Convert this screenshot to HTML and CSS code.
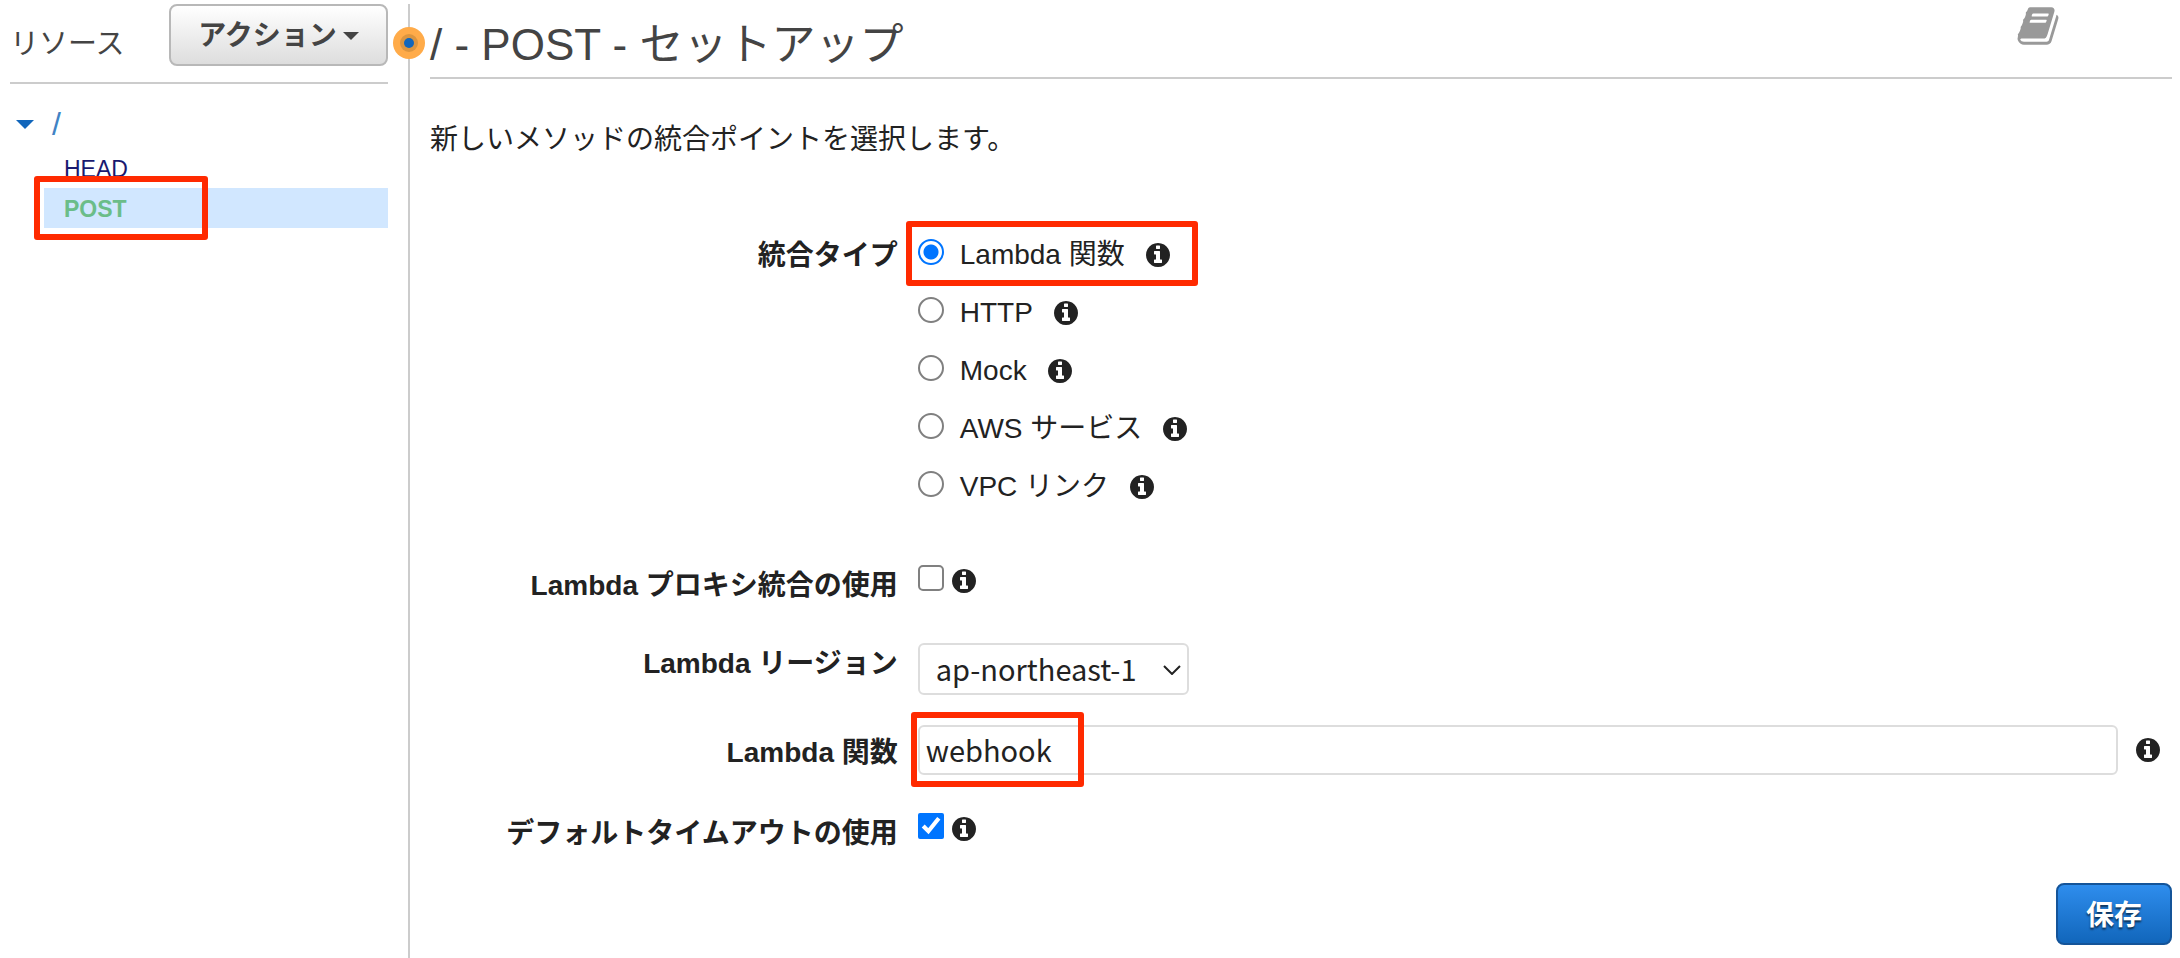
FILE: index.html
```html
<!DOCTYPE html>
<html lang="ja">
<head>
    <meta charset="UTF-8">
    <meta name="viewport" content="width=device-width, initial-scale=1.0">
    <title>API Gateway</title>
    <link rel="stylesheet" href="styles.css">
</head>
<body>
    <svg class="sprite" aria-hidden="true">
        <symbol id="info" viewBox="128 128 1536 1536">
            <path d="M1152 1376v-160q0-14-9-23t-23-9h-96v-512q0-14-9-23t-23-9h-320q-14 0-23 9t-9 23v160q0 14 9 23t23 9h96v320h-96q-14 0-23 9t-9 23v160q0 14 9 23t23 9h448q14 0 23-9t9-23zm-128-896v-160q0-14-9-23t-23-9h-192q-14 0-23 9t-9 23v160q0 14 9 23t23 9h192q14 0 23-9t9-23zm640 416q0 209-103 385.500t-279.500 279.500-385.500 103-385.500-103-279.500-279.500-103-385.500 103-385.500 279.500-279.500 385.500-103 385.500 103 279.500 279.500 103 385.500z"/>
        </symbol>
    </svg>
    <div class="layout">
        <aside class="sidebar">
            <div class="sidebar-header">
                <span class="sidebar-title">リソース</span>
                <button type="button" class="btn-action">アクション<span class="caret"></span></button>
            </div>
            <div class="tree-root">
                <span class="tree-caret"></span>
                <a href="#">/</a>
            </div>
            <ul class="methods">
                <li><a href="#" class="head">HEAD</a></li>
                <li class="selected"><a href="#" class="post">POST</a><span class="mark mark-post"></span></li>
            </ul>
        </aside>
        <div class="splitter">
            <svg class="handle" viewBox="0 0 32 32">
                <circle cx="16" cy="16" r="16" fill="#ffab49"/>
                <circle cx="16" cy="16" r="9" fill="#dc953f"/>
                <circle cx="16" cy="16" r="5" fill="#1166bb"/>
            </svg>
        </div>
        <main class="main">
            <header class="page-header">
                <h1>/ - POST - セットアップ</h1>
                <a href="#" class="docs" aria-label="Docs">
                    <svg viewBox="0 0 1792 1792">
                        <path d="M1703 478q40 57 18 129l-275 906q-19 64-76.500 107.500t-122.500 43.500h-923q-77 0-148.500-53.500t-99.500-131.500q-24-67-2-127 0-4 3-27t4-37q1-8-3-21.500t-3-19.500q2-11 8-21t16.500-23.500 16.500-23.500q23-38 45-91.500t30-91.500q3-10 .5-30t-.5-28q3-11 17-28t17-23q21-36 42-92t25-90q1-9-2.500-32t.5-28q4-13 22-30.500t22-22.500q19-26 42.500-84.500t27.500-96.500q1-8-3-25.500t-2-26.500q2-8 9-18t18-23 17-21q8-12 16.500-30.500t15-35 16-36 19.500-32 26.500-23.500 36-11.500 47.500 5.500l-1 3q38-9 51-9h761q74 0 114 56t18 130l-274 906q-36 119-71.500 153.500t-128.500 34.500h-869q-27 0-38 15-11 16-1 43 24 70 144 70h923q29 0 56-15.500t35-41.500l300-987q7-22 5-57 38 15 59 43zm-1064 2q-4 13 2 22.500t20 9.500h608q13 0 25.500-9.500t16.500-22.500l21-64q4-13-2-22.500t-20-9.500h-608q-13 0-25.500 9.500t-16.500 22.500zm-83 256q-4 13 2 22.500t20 9.500h608q13 0 25.500-9.500t16.500-22.500l21-64q4-13-2-22.500t-20-9.500h-608q-13 0-25.500 9.500t-16.500 22.500z"/>
                    </svg>
                </a>
            </header>
            <p class="lead">新しいメソッドの統合ポイントを選択します。</p>
            <form>
                <div class="row types" role="radiogroup" aria-labelledby="typeLabel">
                    <span class="row-label" id="typeLabel">統合タイプ</span>
                    <div class="options">
                        <div class="option">
                            <input type="radio" id="typeLambda" name="type" checked>
                            <label for="typeLambda">Lambda 関数</label>
                            <svg class="info"><use href="#info"/></svg>
                            <span class="mark mark-type"></span>
                        </div>
                        <div class="option">
                            <input type="radio" id="typeHttp" name="type">
                            <label for="typeHttp">HTTP</label>
                            <svg class="info"><use href="#info"/></svg>
                        </div>
                        <div class="option">
                            <input type="radio" id="typeMock" name="type">
                            <label for="typeMock">Mock</label>
                            <svg class="info"><use href="#info"/></svg>
                        </div>
                        <div class="option">
                            <input type="radio" id="typeAws" name="type">
                            <label for="typeAws">AWS サービス</label>
                            <svg class="info"><use href="#info"/></svg>
                        </div>
                        <div class="option">
                            <input type="radio" id="typeVpc" name="type">
                            <label for="typeVpc">VPC リンク</label>
                            <svg class="info"><use href="#info"/></svg>
                        </div>
                    </div>
                </div>
                <div class="row">
                    <label class="row-label" for="proxy">Lambda プロキシ統合の使用</label>
                    <div class="check">
                        <input type="checkbox" id="proxy">
                        <svg class="info"><use href="#info"/></svg>
                    </div>
                </div>
                <div class="row row-select">
                    <label class="row-label" for="region">Lambda リージョン</label>
                    <div class="select">
                        <select id="region">
                            <option>ap-northeast-1</option>
                        </select>
                        <svg class="chevron" viewBox="0 0 18 10"><path d="M1 1l8 8 8-8"/></svg>
                    </div>
                </div>
                <div class="row row-text">
                    <label class="row-label" for="function">Lambda 関数</label>
                    <div class="text">
                        <input type="text" id="function" value="webhook">
                        <svg class="info"><use href="#info"/></svg>
                        <span class="mark mark-function"></span>
                    </div>
                </div>
                <div class="row">
                    <label class="row-label" for="timeout">デフォルトタイムアウトの使用</label>
                    <div class="check">
                        <input type="checkbox" id="timeout" checked>
                        <svg class="info"><use href="#info"/></svg>
                    </div>
                </div>
                <div class="actions">
                    <button type="submit" class="btn-save">保存</button>
                </div>
            </form>
        </main>
    </div>
</body>
</html>
```
FILE: styles.css
```css
* {
    box-sizing: border-box;
}
body {
    margin: 0;
    background-color: #fff;
    color: #222;
    font-family: "Liberation Sans", "Noto Sans CJK JP", sans-serif;
    font-size: 28px;
    line-height: 38px;
}
a {
    text-decoration: none;
}
.sprite {
    display: none;
}
.layout {
    display: flex;
    min-height: 100vh;
    padding: 4px 8px 0 10px;
}

/* sidebar */
.sidebar {
    flex: 0 0 378px;
}
.sidebar-header {
    display: flex;
    justify-content: space-between;
    align-items: flex-start;
    height: 80px;
    border-bottom: 2px solid #ccc;
}
.sidebar-title {
    padding-top: 21px;
    color: #444;
    font-size: 29px;
}
.btn-action {
    display: flex;
    justify-content: center;
    align-items: center;
    gap: 6px;
    width: 219px;
    height: 62px;
    padding: 0 0 4px;
    border: 2px solid #b8b8b8;
    border-radius: 8px;
    background: linear-gradient(#fff, #ddd);
    color: #444;
    font: bold 28px "Liberation Sans", "Noto Sans CJK JP", sans-serif;
}
.caret {
    margin-top: 6px;
    border-top: 8px solid #444;
    border-left: 8px solid transparent;
    border-right: 8px solid transparent;
}
.tree-root {
    display: flex;
    align-items: center;
    gap: 18px;
    height: 64px;
    padding: 16px 0 0 6px;
}
.tree-root a {
    color: #4183c4;
    font-size: 32px;
}
.tree-caret {
    border-top: 9px solid #1166bb;
    border-left: 9px solid transparent;
    border-right: 9px solid transparent;
}
.methods {
    margin: 0 0 0 34px;
    padding: 0;
    list-style: none;
    font-size: 23px;
    line-height: 38px;
}
.methods li {
    position: relative;
    padding: 2px 0 0 20px;
}
.methods .selected {
    background-color: #d1e7ff;
}
.head {
    color: #191970;
}
.post {
    color: #6bbd89;
    font-weight: bold;
}

/* splitter */
.splitter {
    position: relative;
    flex: 0 0 2px;
    margin: 0 20px;
    background-color: #ccc;
}
.handle {
    position: absolute;
    top: 23px;
    left: -15px;
    width: 32px;
    height: 32px;
}

/* content */
.main {
    flex: 1;
}
.page-header {
    display: flex;
    justify-content: space-between;
    height: 75px;
    padding-right: 112px;
    border-bottom: 2px solid #ccc;
}
h1 {
    margin: 0;
    padding-top: 13px;
    color: #444;
    font-size: 44px;
    font-weight: normal;
    line-height: 56px;
}
.docs svg {
    display: block;
    width: 44px;
    height: 44px;
    fill: #999;
}
.lead {
    margin: 42px 0 66px;
}
.row {
    display: flex;
    margin-bottom: 38px;
}
.row-label {
    flex: 0 0 28%;
    padding: 2px 20px 0 0;
    font-weight: bold;
    text-align: right;
}
.types {
    margin-bottom: 50px;
}
.types .row-label {
    padding-top: 12px;
}
.option {
    position: relative;
    display: flex;
    align-items: center;
    height: 58px;
}
.option label {
    margin: 0 21px 0 16px;
    padding-top: 2px;
}
input[type="radio"],
input[type="checkbox"] {
    flex: none;
    width: 26px;
    height: 26px;
    margin: 0;
}
input[type="radio"] {
    margin-bottom: 4px;
    border: 2px solid #808080;
    border-radius: 50%;
    background-color: #fff;
    appearance: none;
}
input[type="radio"]:checked {
    border-color: #0075ff;
    background: radial-gradient(circle, #0075ff 7px, #fff 8px);
}
input[type="checkbox"]:not(:checked) {
    border: 2px solid #808080;
    border-radius: 5px;
    background-color: #fff;
    appearance: none;
}
.info {
    flex: none;
    width: 24px;
    height: 24px;
    fill: #222;
}
.check {
    display: flex;
    gap: 8px;
}
.check .info,
.option .info {
    margin-top: 4px;
}
.option .info {
    margin-top: 2px;
}
.select {
    position: relative;
}
select,
input[type="text"] {
    display: block;
    border: 2px solid #ddd;
    border-radius: 6px;
    background-color: #fff;
    color: #222;
    font: 29px "Noto Sans CJK JP", sans-serif;
}
select {
    width: 271px;
    height: 52px;
    padding: 0 16px 3px;
    appearance: none;
}
.chevron {
    position: absolute;
    top: 22px;
    right: 8px;
    width: 18px;
    height: 10px;
    fill: none;
    stroke: #222;
    stroke-width: 2;
    pointer-events: none;
}
.row-select {
    margin-bottom: 30px;
}
.row-text {
    align-items: center;
}
.row-text .row-label {
    padding-top: 6px;
}
.text {
    position: relative;
    display: flex;
    flex: 1;
    align-items: center;
    gap: 18px;
    padding-right: 12px;
}
input[type="text"] {
    flex: 1;
    min-width: 0;
    height: 50px;
    padding: 0 6px 3px;
}
.actions {
    display: flex;
    justify-content: flex-end;
    margin-top: -8px;
}
.btn-save {
    width: 116px;
    height: 62px;
    padding: 0 0 2px;
    border: 2px solid #145499;
    border-radius: 8px;
    background: linear-gradient(#2e8ded, #1166bb);
    color: #fff;
    font: bold 28px "Liberation Sans", "Noto Sans CJK JP", sans-serif;
    text-shadow: 0 2px 2px rgba(0, 0, 0, 0.6);
}

/* red highlight frames */
.mark {
    position: absolute;
    border: 6px solid #ff2a00;
    border-radius: 3px;
    pointer-events: none;
}
.mark-post {
    top: -12px;
    left: -10px;
    width: 174px;
    height: 64px;
}
.mark-type {
    top: -4px;
    left: -12px;
    width: 292px;
    height: 65px;
}
.mark-function {
    top: -13px;
    left: -7px;
    width: 173px;
    height: 75px;
}
```
